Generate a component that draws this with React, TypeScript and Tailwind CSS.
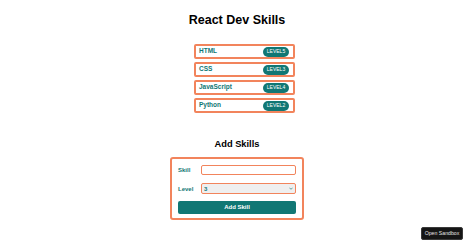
import * as React from "react"

const skills = [
  { name: "HTML", level: 5 },
  { name: "CSS", level: 3 },
  { name: "JavaScript", level: 4 },
  { name: "Python", level: 2 },
]

export default function App() {
  const [skill, setSkill] = React.useState("")
  const [level, setLevel] = React.useState("3")

  return (
    <div className="relative h-[248px] w-full overflow-hidden bg-white font-['Liberation_Sans',Arial,sans-serif] text-black">
      <div className="flex flex-col items-center">
        <h1 className="mt-[13px] text-[12.5px] font-bold leading-[14px]">React Dev Skills</h1>

        <ul className="mt-[17px] pl-[15px]">
          {skills.map((s) => (
            <li
              key={s.name}
              className="mb-[3px] flex h-[15px] w-[101px] items-center justify-between rounded-[2px] border-2 border-[#f2845c] pl-[3px] pr-[4px]"
            >
              <span className="text-[6.5px] font-bold leading-none text-[#117774]">{s.name}</span>
              <span className="flex h-[10px] w-[26px] items-center justify-center rounded-full bg-[#117774] text-[5px] leading-none text-white">
                LEVEL{s.level}
              </span>
            </li>
          ))}
        </ul>

        <h2 className="mt-[23px] text-[9.3px] font-bold leading-[11px]">Add Skills</h2>

        <form
          className="mt-[7px] flex h-[63px] w-[134px] flex-col rounded-[3px] border-2 border-[#f2845c] px-[6px] pt-[6px]"
          onSubmit={(e) => e.preventDefault()}
        >
          <div className="flex items-center">
            <label className="w-[23px] text-[6px] font-bold leading-none text-[#117774]">Skill</label>
            <input
              value={skill}
              onChange={(e) => setSkill(e.target.value)}
              className="h-[10px] flex-1 rounded-[2px] border-[1.5px] border-[#f2845c] bg-white px-[2px] text-[5.5px] outline-none"
            />
          </div>
          <div className="mt-[8px] flex items-center">
            <label className="w-[23px] text-[6px] font-bold leading-none text-[#117774]">Level</label>
            <div className="relative flex-1">
              <select
                value={level}
                onChange={(e) => setLevel(e.target.value)}
                className="block h-[11px] w-full appearance-none rounded-[2px] border-[1.5px] border-[#f2845c] bg-[#efefef] py-0 pl-[2px] text-[6px] font-bold leading-none text-[#117774] outline-none"
              >
                {[1, 2, 3, 4, 5].map((n) => (
                  <option key={n} value={n}>{n}</option>
                ))}
              </select>
              <svg
                viewBox="0 0 10 6"
                className="pointer-events-none absolute right-[3px] top-[4px] h-[3px] w-[4px]"
                fill="none"
                stroke="#117774"
                strokeWidth="1.6"
              >
                <path d="M1 1l4 4 4-4" />
              </svg>
            </div>
          </div>
          <button
            type="submit"
            className="mt-[7px] h-[12.5px] w-full rounded-[2px] bg-[#117774] text-[6px] font-bold leading-none text-white"
          >
            Add Skill
          </button>
        </form>
      </div>

      <div className="absolute bottom-[8px] right-[11px] flex h-[13px] w-[42px] items-center justify-center rounded-[2px] border border-[#3a3a3a] bg-[#151515] text-[5.2px] leading-none text-[#e5e5e5]">
        Open Sandbox
      </div>
    </div>
  )
}
